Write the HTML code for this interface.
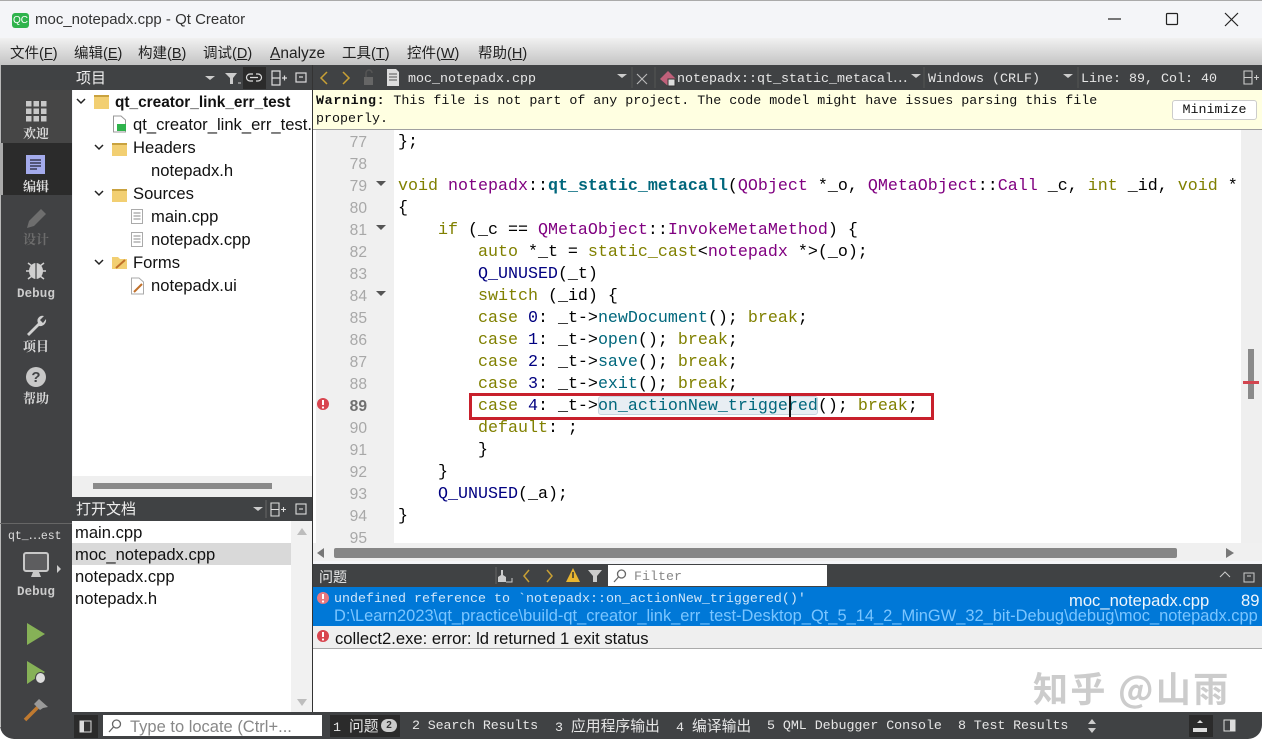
<!DOCTYPE html>
<html><head><meta charset="utf-8"><style>
html,body{margin:0;padding:0;background:#fff}
#r{position:relative;width:1262px;height:739px;overflow:hidden;background:#f4f5f8;font-family:"Liberation Sans","Noto Sans CJK SC",sans-serif}
.a{position:absolute;white-space:pre}
.d{position:absolute;background:#404244}
.m{font-family:"Liberation Mono","Noto Sans CJK SC",monospace;font-size:13.33px;margin-top:1px}
.w{color:#e6e6e6}
.z{font-size:14.8px;line-height:18px;font-family:"Liberation Sans","Noto Sans CJK SC",sans-serif}
.side{position:absolute;left:0;width:72px;text-align:center;color:#d8d8d8;font:bold 13px "Noto Serif CJK SC","Liberation Serif",serif}
.sb{font:bold 12.5px "Liberation Mono",monospace;letter-spacing:.1px}
.n{position:absolute;left:316px;width:51px;text-align:right;color:#a8a8a8;font:15.6px/22px "Liberation Sans",sans-serif;margin-top:1px}
.c{position:absolute;left:398px;font:16.67px/22px "Liberation Mono",monospace;white-space:pre;color:#000;width:843px;overflow:hidden;margin-top:1px}
.k{color:#808000}.p{color:#800080}.t{color:#00677c}.b{color:#00677c;font-weight:bold}.u{color:#000080}
.tree{position:absolute;font-size:16.6px;color:#111;white-space:pre;line-height:20px}
svg{position:absolute;overflow:visible}
.mn{position:absolute;top:45px;font-size:14.5px;line-height:18px;color:#222;white-space:pre}
</style></head><body><div id="r">

<!-- title bar -->
<div class="a" style="left:0;top:0;width:1262px;height:1px;background:#aaa"></div>
<div class="a" style="left:0;top:1px;width:1262px;height:37px;background:#f4f5f8;border-radius:6px 6px 0 0"></div>
<div class="a" style="left:12px;top:13px;width:17px;height:15px;background:#2fb34c;border-radius:3px;color:#fff;font:10px/15px 'Liberation Sans';text-align:center">QC</div>
<div class="a" style="left:35px;top:10px;font-size:15px;line-height:20px;color:#333">moc_notepadx.cpp - Qt Creator</div>
<svg style="left:1100px;top:9px" width="162" height="20" fill="none" stroke="#222" stroke-width="1.2"><path d="M8 10H21"/><rect x="66.5" y="4.5" width="11" height="11" rx="1"/><path d="M125 4L138 17M138 4L125 17"/></svg>

<!-- menu -->
<div class="a" style="left:0;top:38px;width:1262px;height:27px;background:linear-gradient(#f1f1f1,#c4c4c4)"></div>
<div class="mn" style="left:10px">文件(<u>F</u>)</div>
<div class="mn" style="left:74px">编辑(<u>E</u>)</div>
<div class="mn" style="left:138px">构建(<u>B</u>)</div>
<div class="mn" style="left:203px">调试(<u>D</u>)</div>
<div class="mn" style="left:270px;font-size:15.5px"><u>A</u>nalyze</div>
<div class="mn" style="left:342px">工具(<u>T</u>)</div>
<div class="mn" style="left:407px">控件(<u>W</u>)</div>
<div class="mn" style="left:478px">帮助(<u>H</u>)</div>

<!-- dark toolbar -->
<div class="d" style="left:0;top:65px;width:1262px;height:25px"></div>
<div class="a" style="left:76px;top:69px;font-size:15px;line-height:20px;color:#eee">项目</div>
<svg style="left:200px;top:65px" width="112" height="25"><path d="M5 11H15L10 15Z" fill="#ccc"/><rect x="43" y="2" width="23" height="22" fill="#2b2b2b"/><path d="M25 8H37L33 13V19H30V13Z" fill="#ccc"/><path d="M38 18H41" stroke="#ccc"/><g fill="none" stroke="#ddd" stroke-width="1.2"><path d="M53 9H50A3.500 3.500 0 0 0 50 16H53M56 9H58A3.500 3.500 0 0 1 58 16H56M50 12.500H58"/><path d="M72 6h8v14h-8zM72 13h8M82 13h5M84.500 10.500v5"/><rect x="96" y="8" width="10" height="9"/><path d="M99 12h4"/></g></svg>
<div class="a" style="left:73px;top:90px;width:239px;height:407px;background:#fff"></div>

<!-- left sidebar -->
<div class="d" style="left:0;top:90px;width:72px;height:649px;background:#414244"></div>
<div class="a" style="left:0;top:65px;width:1px;height:662px;background:#b8b8b8"></div>
<div class="a" style="left:2px;top:90px;width:70px;height:53px;background:#464646"></div>
<div class="a" style="left:0;top:143px;width:3px;height:52px;background:#aaa"></div>
<div class="a" style="left:3px;top:143px;width:69px;height:52px;background:#2b2b2b"></div>
<svg style="left:25px;top:100px" width="22" height="22" fill="#c8c8c8"><rect x="1" y="1" width="5.500" height="5.500"/><rect x="8.500" y="1" width="5.500" height="5.500"/><rect x="16" y="1" width="5.500" height="5.500"/><rect x="1" y="8.500" width="5.500" height="5.500"/><rect x="8.500" y="8.500" width="5.500" height="5.500"/><rect x="16" y="8.500" width="5.500" height="5.500"/><rect x="1" y="16" width="5.500" height="5.500"/><rect x="8.500" y="16" width="5.500" height="5.500"/><rect x="16" y="16" width="5.500" height="5.500"/></svg>
<div class="side" style="top:123px">欢迎</div>
<svg style="left:26px;top:155px" width="20" height="20"><rect width="19" height="19" fill="#a4abec"/><path d="M4 5h11M4 8h11M4 11h11M4 14h7" stroke="#223" stroke-width="1.2"/></svg>
<div class="side" style="top:176px;color:#ddd">编辑</div>
<svg style="left:24px;top:207px" width="24" height="24"><path d="M3 21L5 14L17 2L22 7L10 19Z" fill="#6e6e6e"/></svg>
<div class="side" style="top:229px;color:#6c6c6c">设计</div>
<svg style="left:25px;top:259px" width="22" height="22" fill="#d0d0d0"><ellipse cx="11" cy="12" rx="7" ry="8"/><path d="M11 3V20" stroke="#414244" stroke-width="1.200"/><path d="M3 4L7 7M19 4L15 7M1 12H5M21 12H17M3 20L7 17M19 20L15 17" stroke="#d0d0d0" stroke-width="1.500"/></svg>
<div class="side sb" style="top:287px;color:#ccc">Debug</div>
<svg style="left:25px;top:313px" width="22" height="24"><path d="M2 21L13 10A5 5 0 0 1 19 3L15 7L18 10L21 6A6 6 0 0 1 14 13L4 23Z" fill="#d0d0d0"/></svg>
<div class="side" style="top:336px">项目</div>
<svg style="left:25px;top:366px" width="22" height="22"><circle cx="11" cy="11" r="10" fill="#c8c8c8"/><text x="11" y="16" text-anchor="middle" font-family="Liberation Sans" font-weight="bold" font-size="15" fill="#414244">?</text></svg>
<div class="side" style="top:388px">帮助</div>
<div class="a" style="left:0;top:523px;width:72px;height:1px;background:#666"></div>
<div class="a m" style="left:8px;top:528px;font-size:11.500px;line-height:16px;color:#ddd">qt_⋯est</div>
<svg style="left:23px;top:552px" width="36" height="28"><rect x="1" y="1" width="24" height="18" rx="2" fill="#5d5d5f" stroke="#c8c8c8" stroke-width="2"/><path d="M8 25L10 20H16L18 25Z" fill="#c8c8c8"/><path d="M34 13L38 17L34 21Z" fill="#ccc"/></svg>
<div class="side sb" style="top:585px;color:#ccc">Debug</div>
<svg style="left:26px;top:623px" width="20" height="22"><path d="M1 0L19 11L1 22Z" fill="#86b157"/></svg>
<svg style="left:26px;top:661px" width="22" height="24"><path d="M1 0L19 11L1 23Z" fill="#86b157"/><ellipse cx="14.500" cy="17" rx="5" ry="5.500" fill="#ddd" stroke="#414244"/></svg>
<svg style="left:23px;top:698px" width="26" height="24"><path d="M2 22L16 8" stroke="#c07a30" stroke-width="3.500"/><path d="M11 6L16 1L25 9L20 10L17 12Z" fill="#9a9a9a"/></svg>

<!-- project tree -->
<svg style="left:76px;top:95px" width="16" height="14" fill="none" stroke="#222" stroke-width="1.500"><path d="M1 4L5 8L9 4"/></svg>
<div class="a" style="left:94px;top:95px;width:15px;height:12px;background:#f2cf72;border-top:2px solid #c9a23f"></div>
<div class="tree" style="left:115px;top:93px;font-weight:bold;font-size:15.4px">qt_creator_link_err_test</div>
<svg style="left:112px;top:115px" width="16" height="18"><path d="M1.500 1H9L13.500 5V17H1.500Z" fill="#fff" stroke="#999"/><rect x="5" y="9" width="9" height="7" fill="#2fb34c"/></svg>
<div class="tree" style="left:133px;top:115px;width:179px;overflow:hidden">qt_creator_link_err_test.pro</div>
<svg style="left:94px;top:141px" width="16" height="14" fill="none" stroke="#222" stroke-width="1.500"><path d="M1 4L5 8L9 4"/></svg>
<div class="a" style="left:112px;top:143px;width:15px;height:11px;background:#f2cf72;border-top:2px solid #c9a23f"></div>
<div class="tree" style="left:133px;top:138px">Headers</div>
<div class="tree" style="left:151px;top:161px">notepadx.h</div>
<svg style="left:94px;top:187px" width="16" height="14" fill="none" stroke="#222" stroke-width="1.500"><path d="M1 4L5 8L9 4"/></svg>
<div class="a" style="left:112px;top:189px;width:15px;height:11px;background:#f2cf72;border-top:2px solid #c9a23f"></div>
<div class="tree" style="left:133px;top:184px">Sources</div>
<svg style="left:130px;top:208px" width="14" height="17" fill="#fff" stroke="#aaa"><path d="M1.500 1.500H12.500V15.500H1.500Z"/><path d="M3.500 5H10.500M3.500 8H10.500M3.500 11H10.500" stroke="#888"/></svg>
<div class="tree" style="left:151px;top:207px">main.cpp</div>
<svg style="left:130px;top:231px" width="14" height="17" fill="#fff" stroke="#aaa"><path d="M1.500 1.500H12.500V15.500H1.500Z"/><path d="M3.500 5H10.500M3.500 8H10.500M3.500 11H10.500" stroke="#888"/></svg>
<div class="tree" style="left:151px;top:230px">notepadx.cpp</div>
<svg style="left:94px;top:256px" width="16" height="14" fill="none" stroke="#222" stroke-width="1.500"><path d="M1 4L5 8L9 4"/></svg>
<svg style="left:112px;top:256px" width="16" height="14"><path d="M0 1H6L8 3H15V13H0Z" fill="#f2cf72"/><path d="M4 12L13 4" stroke="#c0702a" stroke-width="2"/></svg>
<div class="tree" style="left:133px;top:253px">Forms</div>
<svg style="left:130px;top:277px" width="15" height="18"><path d="M1.500 1H9L13.500 5V17H1.500Z" fill="#fff" stroke="#aaa"/><path d="M4 15L12 7" stroke="#c0702a" stroke-width="2"/></svg>
<div class="tree" style="left:151px;top:276px">notepadx.ui</div>
<div class="a" style="left:72px;top:476px;width:240px;height:21px;background:#efefef"></div>
<div class="a" style="left:93px;top:483px;width:179px;height:6px;background:#8a8a8a"></div>

<!-- open documents -->
<div class="d" style="left:72px;top:497px;width:241px;height:24px"></div>
<div class="a" style="left:76px;top:500px;font-size:15px;line-height:20px;color:#eee">打开文档</div>
<svg style="left:250px;top:497px" width="62" height="24"><path d="M3 10H13L8 14Z" fill="#ccc"/><path d="M16 3V21" stroke="#666"/><g fill="none" stroke="#ddd" stroke-width="1.100"><path d="M21 6h8v13h-8zM21 12.500h8M31 12.500h5M33.500 10v5"/><rect x="46" y="7" width="10" height="10"/><path d="M49 12h4"/></g></svg>
<div class="a" style="left:72px;top:521px;width:241px;height:191px;background:#fff"></div>
<div class="a" style="left:291px;top:521px;width:22px;height:191px;background:#f1f1f1"></div>
<svg style="left:295px;top:526px" width="14" height="180" fill="#bdbdbd"><path d="M7 2L12 9H2Z"/><path d="M2 173H12L7 180Z"/></svg>
<div class="a" style="left:72px;top:543px;width:219px;height:22px;background:#d9d9d9"></div>
<div class="tree" style="left:75px;top:523px">main.cpp</div>
<div class="tree" style="left:75px;top:545px">moc_notepadx.cpp</div>
<div class="tree" style="left:75px;top:567px">notepadx.cpp</div>
<div class="tree" style="left:75px;top:589px">notepadx.h</div>

<!-- editor toolbar -->
<div class="a" style="left:312px;top:65px;width:1px;height:674px;background:#333"></div>
<svg style="left:313px;top:65px" width="949" height="25">
<g fill="none" stroke="#c8a035" stroke-width="1.500"><path d="M14 7L8 13L14 19"/><path d="M30 7L36 13L30 19"/></g>
<rect x="51" y="12" width="9" height="8" fill="#666"/><path d="M53 12V8a3 3 0 0 1 6 0" fill="none" stroke="#555" stroke-width="1.500"/>
<path d="M74 4H83L86 7V21H74Z" fill="#ddd"/><path d="M76 9h8M76 12h8M76 15h8" stroke="#555"/>
<path d="M304 9H314L309 13Z" fill="#ccc"/><path d="M319 2V23" stroke="#555"/>
<path d="M324 9L334 19M334 9L324 19" stroke="#bbb" fill="none" stroke-width="1.100"/><path d="M342 2V23" stroke="#555"/>
<path d="M355 6L363 14L355 21L347 14Z" fill="#c0607a"/><rect x="355" y="14" width="7" height="7" fill="#ddd" stroke="#333"/>
<path d="M598 9H608L603 13Z" fill="#ccc"/><path d="M611 2V23" stroke="#555"/>
<path d="M750 9H760L755 13Z" fill="#ccc"/><path d="M765 2V23" stroke="#555"/>
<g fill="none" stroke="#ccc" stroke-width="1.100"><path d="M931 6h8v13h-8zM931 12.500h8M941 12.500h5M943.500 10v5"/></g>
</svg>
<div class="a m w" style="left:408px;top:70px;line-height:18px">moc_notepadx.cpp</div>
<div class="a m w" style="left:677px;top:70px;line-height:18px">notepadx::qt_static_metacal⋯</div>
<div class="a m w" style="left:928px;top:70px;line-height:18px">Windows (CRLF)</div>
<div class="a m w" style="left:1081px;top:70px;line-height:18px">Line: 89, Col: 40</div>

<!-- warning bar -->
<div class="a" style="left:313px;top:90px;width:949px;height:39px;background:#ffffe1;border-bottom:1px solid #a0a0a0"></div>
<div class="a m" style="left:316px;top:92px;line-height:17.500px;color:#111"><b style="letter-spacing:.67px">Warning:</b> This file is not part of any project. The code model might have issues parsing this file
properly.</div>
<div class="a m" style="left:1172px;top:99px;width:83px;height:18px;line-height:20px;background:#fff;border:1px solid #ccc;border-radius:3px;text-align:center;color:#111">Minimize</div>

<!-- code -->
<div class="a" style="left:313px;top:130px;width:949px;height:413px;background:#fff;overflow:hidden"></div>
<div class="a" style="left:316px;top:130px;width:78px;height:413px;background:#f0f0f0"></div>
<div class="a" style="left:1241px;top:130px;width:21px;height:431px;background:#efefef"></div>
<div class="a" style="left:1248px;top:349px;width:6px;height:50px;background:#8a8a8a"></div>
<div class="a" style="left:1243px;top:381px;width:16px;height:3px;background:#d2454f"></div>
<div class="a" style="left:313px;top:130px;width:3px;height:431px;background:#fff"></div>

<div class="n" style="top:131px">77</div><div class="c" style="top:131px">};</div>
<div class="n" style="top:153px">78</div>
<div class="n" style="top:175px">79</div><div class="c" style="top:175px"><span class="k">void</span> <span class="p">notepadx</span>::<span class="b">qt_static_metacall</span>(<span class="p">QObject</span> *_o, <span class="p">QMetaObject</span>::<span class="p">Call</span> _c, <span class="k">int</span> _id, <span class="k">void</span> *</div>
<div class="n" style="top:197px">80</div><div class="c" style="top:197px">{</div>
<div class="n" style="top:219px">81</div><div class="c" style="top:219px">    <span class="k">if</span> (_c == <span class="p">QMetaObject</span>::<span class="p">InvokeMetaMethod</span>) {</div>
<div class="n" style="top:241px">82</div><div class="c" style="top:241px">        <span class="k">auto</span> *_t = <span class="k">static_cast</span>&lt;<span class="p">notepadx</span> *&gt;(_o);</div>
<div class="n" style="top:263px">83</div><div class="c" style="top:263px">        <span class="u">Q_UNUSED</span>(_t)</div>
<div class="n" style="top:285px">84</div><div class="c" style="top:285px">        <span class="k">switch</span> (_id) {</div>
<div class="n" style="top:307px">85</div><div class="c" style="top:307px">        <span class="k">case</span> <span class="u">0</span>: _t-&gt;<span class="t">newDocument</span>(); <span class="k">break</span>;</div>
<div class="n" style="top:329px">86</div><div class="c" style="top:329px">        <span class="k">case</span> <span class="u">1</span>: _t-&gt;<span class="t">open</span>(); <span class="k">break</span>;</div>
<div class="n" style="top:351px">87</div><div class="c" style="top:351px">        <span class="k">case</span> <span class="u">2</span>: _t-&gt;<span class="t">save</span>(); <span class="k">break</span>;</div>
<div class="n" style="top:373px">88</div><div class="c" style="top:373px">        <span class="k">case</span> <span class="u">3</span>: _t-&gt;<span class="t">exit</span>(); <span class="k">break</span>;</div>
<div class="a" style="left:598px;top:396px;width:220px;height:19px;background:#e8eef3;border:1px solid #c8d4de;border-radius:3px;box-sizing:border-box"></div>
<div class="n" style="top:395px;font-weight:bold;color:#707070">89</div><div class="c" style="top:395px">        <span class="k">case</span> <span class="u">4</span>: _t-&gt;<span class="t">on_actionNew_triggered</span>(); <span class="k">break</span>;</div>
<div class="n" style="top:417px">90</div><div class="c" style="top:417px">        <span class="k">default</span>: ;</div>
<div class="n" style="top:439px">91</div><div class="c" style="top:439px">        }</div>
<div class="n" style="top:461px">92</div><div class="c" style="top:461px">    }</div>
<div class="n" style="top:483px">93</div><div class="c" style="top:483px">    <span class="u">Q_UNUSED</span>(_a);</div>
<div class="n" style="top:505px">94</div><div class="c" style="top:505px">}</div>
<div class="n" style="top:527px;height:16px;overflow:hidden">95</div>
<div class="a" style="left:789px;top:395px;width:2px;height:22px;background:#111"></div>
<svg style="left:376px;top:181px" width="12" height="120" fill="#555"><path d="M0 0H10L5 5Z"/><path d="M0 44H10L5 49Z"/><path d="M0 110H10L5 115Z"/></svg>
<svg style="left:316px;top:397px" width="14" height="14"><circle cx="7" cy="7" r="6" fill="#d8454f"/><path d="M7 3V8" stroke="#fff" stroke-width="2"/><circle cx="7" cy="10.500" r="1.100" fill="#fff"/></svg>
<div class="a" style="left:469px;top:393px;width:465px;height:27px;border:3px solid #c8202c;box-sizing:border-box"></div>

<!-- h scrollbar -->
<div class="a" style="left:313px;top:543px;width:949px;height:18px;background:#f0f0f0"></div>
<div class="a" style="left:334px;top:548px;width:843px;height:10px;background:#868686;border-radius:2px"></div>
<svg style="left:316px;top:546px" width="920" height="14" fill="#777"><path d="M8 2V12L1 7Z"/><path d="M910 2L918 7L910 12Z"/></svg>

<!-- issues panel -->
<div class="d" style="left:313px;top:564px;width:949px;height:23px"></div>
<div class="a" style="left:319px;top:567px;font-size:14px;line-height:20px;color:#eee">问题</div>
<svg style="left:480px;top:564px" width="782" height="23">
<path d="M16 3V20" stroke="#666"/>
<path d="M18 18V13L21 11V6H23V11L26 13V18Z" fill="#ccc"/><path d="M26 18H32V14" stroke="#ccc" fill="none"/>
<g fill="none" stroke="#c8a035" stroke-width="1.500"><path d="M49 6L44 12L49 18"/><path d="M67 6L72 12L67 18"/></g>
<path d="M93 4L100 18H86Z" fill="#e8b530"/><path d="M93 8V14" stroke="#333" stroke-width="1.500"/>
<path d="M108 6H122L117 12V18H113V12Z" fill="#ccc"/>
<path d="M740 13L745 8L750 13" fill="none" stroke="#ccc"/><rect x="764" y="9" width="10" height="9" fill="none" stroke="#ccc"/><path d="M767 12h4" stroke="#ccc"/>
</svg>
<div class="a" style="left:608px;top:565px;width:219px;height:21px;background:#fff"></div>
<svg style="left:613px;top:568px" width="18" height="16" fill="none" stroke="#666" stroke-width="1.300"><circle cx="8.500" cy="6" r="4"/><path d="M5.500 9L1 14"/></svg>
<div class="a m" style="left:634px;top:568px;line-height:18px;color:#888">Filter</div>
<div class="a" style="left:313px;top:587px;width:949px;height:39px;background:#0078d7"></div>
<svg style="left:316px;top:591px" width="14" height="14"><circle cx="7" cy="7" r="6" fill="#e8787f"/><path d="M7 3V8" stroke="#fff" stroke-width="2"/><circle cx="7" cy="10.500" r="1.100" fill="#fff"/></svg>
<div class="a m" style="left:334px;top:590px;line-height:18px;color:#cfe6fa">undefined reference to `notepadx::on_actionNew_triggered()'</div>
<div class="a" style="left:334px;top:606px;font-size:16.44px;line-height:20px;color:#7ac5ff">D:\Learn2023\qt_practice\build-qt_creator_link_err_test-Desktop_Qt_5_14_2_MinGW_32_bit-Debug\debug\moc_notepadx.cpp</div>
<div class="a" style="left:1069px;top:591px;font-size:16.6px;line-height:20px;color:#f0f6fc">moc_notepadx.cpp</div>
<div class="a" style="left:1241px;top:591px;font-size:16.6px;line-height:20px;color:#f0f6fc">89</div>
<div class="a" style="left:313px;top:626px;width:949px;height:22px;background:#efefef;border-bottom:1px solid #aaa"></div>
<svg style="left:316px;top:629px" width="14" height="14"><circle cx="7" cy="7" r="6" fill="#d8454f"/><path d="M7 3V8" stroke="#fff" stroke-width="2"/><circle cx="7" cy="10.500" r="1.100" fill="#fff"/></svg>
<div class="a" style="left:335px;top:629px;font-size:16.6px;line-height:20px;color:#111">collect2.exe: error: ld returned 1 exit status</div>
<div class="a" style="left:313px;top:649px;width:949px;height:63px;background:#fff"></div>
<div class="a" style="left:1033px;top:665px;font:bold 35px/46px 'Noto Sans CJK SC',sans-serif;color:#cccccc;letter-spacing:2.4px">知乎 @山雨</div>

<!-- bottom bar -->
<div class="d" style="left:72px;top:712px;width:1190px;height:27px"></div>
<svg style="left:72px;top:714px" width="240" height="24"><rect x="2" y="1" width="24" height="23" fill="#2b2b2b"/><rect x="8" y="7" width="11" height="11" fill="#333" stroke="#ddd"/><rect x="8" y="7" width="4" height="11" fill="#ddd"/></svg>
<div class="a" style="left:103px;top:715px;width:219px;height:21px;background:#fff"></div>
<svg style="left:108px;top:718px" width="18" height="16" fill="none" stroke="#666" stroke-width="1.300"><circle cx="8.500" cy="6" r="4"/><path d="M5.500 9L1 14"/></svg>
<div class="a" style="left:130px;top:717px;font-size:16.5px;line-height:20px;color:#888">Type to locate (Ctrl+...</div>
<div class="a" style="left:330px;top:715px;width:70px;height:22px;background:#2b2b2b"></div>
<div class="a m w" style="left:333px;top:717px;line-height:18px">1 <span class="z">问题</span></div>
<div class="a" style="left:381px;top:719px;width:16px;height:13px;border-radius:7px;background:#ccc;color:#333;font:bold 10px/13px 'Liberation Sans';text-align:center">2</div>
<div class="a m w" style="left:412px;top:717px;line-height:18px;letter-spacing:-.12px">2 Search Results</div>
<div class="a m w" style="left:555px;top:717px;line-height:18px">3 <span class="z">应用程序输出</span></div>
<div class="a m w" style="left:676px;top:717px;line-height:18px">4 <span class="z">编译输出</span></div>
<div class="a m w" style="left:767px;top:717px;line-height:18px;letter-spacing:-.05px">5 QML Debugger Console</div>
<div class="a m w" style="left:958px;top:717px;line-height:18px;letter-spacing:-.12px">8 Test Results</div>
<svg style="left:1085px;top:714px" width="177" height="24"><path d="M3 10L7 5L11 10ZM3 14L7 19L11 14Z" fill="#ccc"/><rect x="104" y="1" width="24" height="22" fill="#2b2b2b"/><rect x="108" y="14" width="14" height="4" fill="#ddd"/><path d="M115 6L118 9H112Z" fill="#ddd"/><rect x="139" y="6" width="11" height="11" fill="none" stroke="#ddd"/><rect x="145" y="6" width="5" height="11" fill="#ddd"/></svg>
<svg style="left:0;top:725px" width="14" height="14"><path d="M0 0V14H14A14 14 0 0 1 0 0Z" fill="#fff"/></svg>
<svg style="left:1248px;top:725px" width="14" height="14"><path d="M14 0V14H0A14 14 0 0 0 14 0Z" fill="#fff"/></svg>
</div></body></html>
